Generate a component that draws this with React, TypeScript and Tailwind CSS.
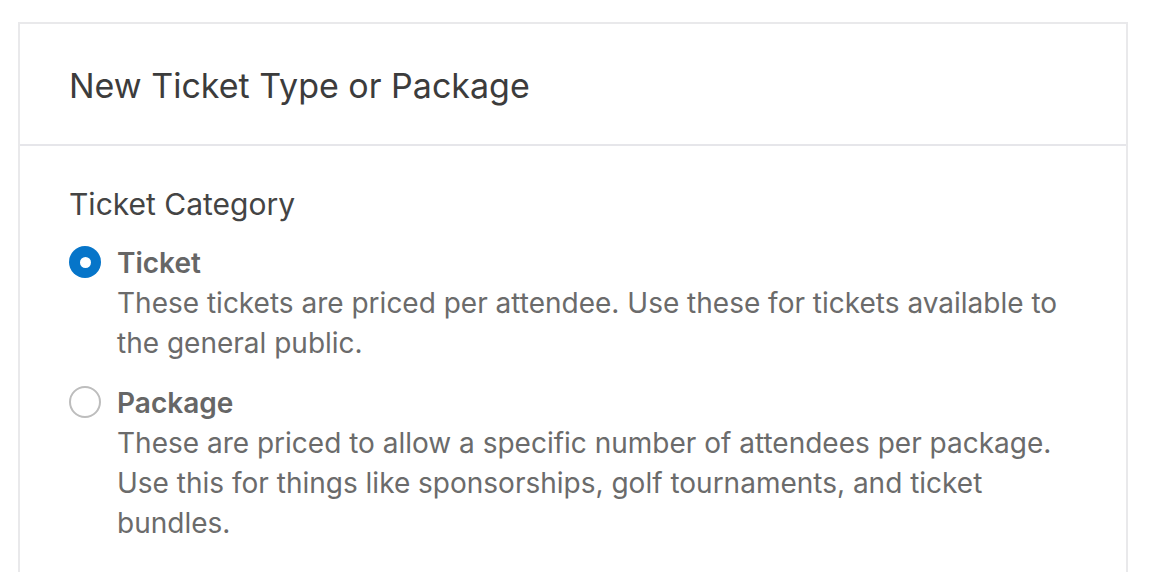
export default function App() {
  return (
    <div className="h-screen overflow-hidden bg-white pl-[18px] pr-6 pt-[22px] font-['Inter',sans-serif]">
      <div className="w-[1110px] border-2 border-b-0 border-[#e9e9eb] bg-white">
        <div className="flex h-[122px] items-center border-b-2 border-[#e6e6ea] px-[49px]">
          <h1 className="pt-1 text-[34px] leading-10 text-[#3c3c3c]">New Ticket Type or Package</h1>
        </div>
        <div className="px-[49px] pt-[38px] pb-10">
          <h2 className="text-[30px] leading-10 text-[#444]">Ticket Category</h2>
          <div className="mt-[19px] flex flex-col gap-5">
            <label className="flex gap-4">
              <span className="mt-[3px] flex h-8 w-8 shrink-0 items-center justify-center rounded-full bg-[#0675c9]">
                <span className="h-[11px] w-[11px] rounded-full bg-white" />
              </span>
              <span className="flex flex-col">
                <span className="text-[28px] font-semibold leading-10 text-[#666]">Ticket</span>
                <span className="text-[28px] leading-10 text-[#6b6b6b]">
                  These tickets are priced per attendee. Use these for tickets available to the general public.
                </span>
              </span>
            </label>
            <label className="flex gap-4">
              <span className="mt-[3px] h-8 w-8 shrink-0 rounded-full border-2 border-[#bdbdbd]" />
              <span className="flex flex-col">
                <span className="text-[28px] font-semibold leading-10 text-[#666]">Package</span>
                <span className="text-[28px] leading-10 text-[#6b6b6b]">
                  These are priced to allow a specific number of attendees per package. Use this for things like sponsorships, golf tournaments, and ticket bundles.
                </span>
              </span>
            </label>
          </div>
        </div>
      </div>
    </div>
  );
}
